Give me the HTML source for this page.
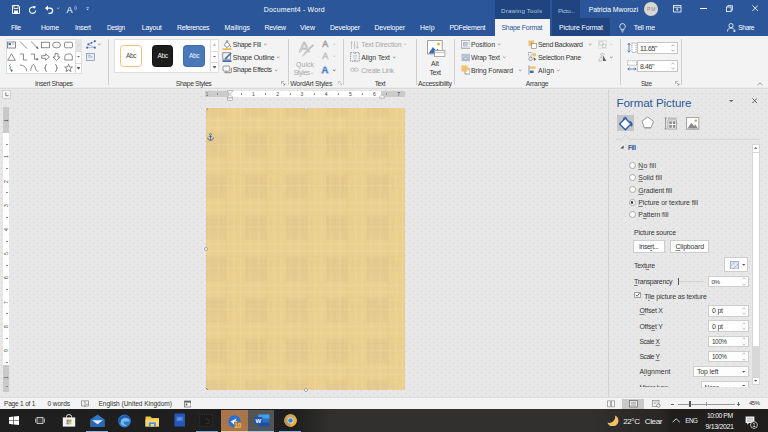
<!DOCTYPE html>
<html><head><meta charset="utf-8"><title>Document4 - Word</title>
<style>

html,body{margin:0;padding:0;}
body{width:768px;height:432px;overflow:hidden;background:#e5e5e5;font-family:"Liberation Sans",sans-serif;}
#root{position:relative;width:768px;height:432px;overflow:hidden;}
.b{position:absolute;display:block;}
.t{position:absolute;white-space:nowrap;display:block;}
u{text-decoration:underline;text-decoration-thickness:0.5px;text-underline-offset:0.6px;text-decoration-color:rgba(60,60,60,0.6);}

</style></head><body>
<div id="root">
<div class="b" style="left:0px;top:0px;width:768px;height:35.5px;background:#2b579a;"></div><div class="b" style="left:494.5px;top:0px;width:55.5px;height:18.8px;background:#1f447f;"></div><div class="b" style="left:552px;top:0px;width:28px;height:18px;background:#1f447f;"></div><div class="b" style="left:552px;top:18px;width:58px;height:17.5px;background:#1f447f;"></div><div class="b" style="left:494.5px;top:18.8px;width:55.5px;height:17.2px;background:#f3f3f3;"></div><svg class="b" style="left:12px;top:5px;" width="8" height="9" viewBox="0 0 8 9"><path d="M0.5 0.5 H6.5 L7.5 1.5 V8.5 H0.5Z" fill="none" stroke="#fff" stroke-width="1"/><rect x="2" y="0.5" width="4" height="3" fill="none" stroke="#fff" stroke-width="0.8"/><rect x="2" y="5.5" width="4" height="3" fill="#fff"/></svg><svg class="b" style="left:29px;top:5.5px;" width="8" height="9" viewBox="0 0 8 9"><path d="M5.2 1.4 A3.2 3.2 0 1 0 6.8 4.5" fill="none" stroke="#fff" stroke-width="1.1"/><path d="M4 0 L7.2 0.6 L5 3Z" fill="#fff"/></svg><svg class="b" style="left:45px;top:5px;" width="9" height="9" viewBox="0 0 9 9"><path d="M1 3.2 H5 A2.6 2.6 0 0 1 5 8.4 H3.5" fill="none" stroke="#fff" stroke-width="1.2"/><path d="M0 3.2 L3 0.6 V5.8Z" fill="#fff"/></svg><svg class="b" style="left:55.8px;top:5.8px;" width="4.4" height="4.4" viewBox="0 0 4.4 4.4"><path d="M1 1.6 L2.2 2.8 L3.4 1.6" fill="none" stroke="#c8d4e8" stroke-width="0.7"/></svg><span class="t" style="font-size:9.2px;color:#fff;line-height:13px;top:4.4px;letter-spacing:0.359px;left:66.5px;">A</span><svg class="b" style="left:73.6px;top:5px;" width="3.5" height="6" viewBox="0 0 3.5 6"><path d="M0.4 1.6 Q1.5 3 0.4 4.4" fill="none" stroke="#d5deee" stroke-width="0.6"/><path d="M1.6 0.5 Q3.6 3 1.6 5.5" fill="none" stroke="#c3cfe6" stroke-width="0.6"/></svg><svg class="b" style="left:85.7px;top:7.3px;" width="3.2" height="4" viewBox="0 0 3.2 4"><path d="M0.3 0.5 H2.9" stroke="#d4dded" stroke-width="0.6"/><path d="M0.3 1.7 L1.6 3.2 L2.9 1.7Z" fill="#d4dded"/></svg><span class="t" style="font-size:6.93px;color:#fff;line-height:10px;top:5px;letter-spacing:0.190px;left:263.8px;">Document4  -  Word</span><span class="t" style="font-size:6.16px;color:#b9c6dd;line-height:9px;top:5.5px;letter-spacing:0.203px;left:501px;">Drawing Tools</span><span class="t" style="font-size:6.16px;color:#b9c6dd;line-height:9px;top:5.5px;letter-spacing:-0.261px;left:558px;">Pictu...</span><span class="t" style="font-size:6.93px;color:#fff;line-height:10px;top:5px;letter-spacing:-0.105px;left:588.8px;">Patricia Mworozi</span><div class="b" style="left:644px;top:1.5px;width:14px;height:14px;background:#d9d6d4;border-radius:7px;"></div><span class="t" style="font-size:5px;color:#8a8a8a;line-height:7px;top:5.7px;letter-spacing:1.000px;left:647px;">PM</span><svg class="b" style="left:673px;top:5px;" width="9" height="8" viewBox="0 0 9 8"><rect x="0.5" y="0.5" width="7.5" height="6.5" fill="none" stroke="#fff" stroke-width="0.8"/><path d="M0.5 2.3 H8" stroke="#fff" stroke-width="0.7"/><path d="M4.2 3.6 V6 M3 4.6 L4.2 3.5 L5.4 4.6" stroke="#fff" stroke-width="0.7" fill="none"/></svg><div class="b" style="left:700px;top:8px;width:6.5px;height:0.8px;background:#fff;"></div><svg class="b" style="left:726px;top:5px;" width="7" height="8" viewBox="0 0 7 8"><rect x="0.5" y="2" width="4.6" height="4.6" fill="none" stroke="#fff" stroke-width="0.8"/><path d="M1.8 2 V0.6 H6.4 V5.2 H5.1" fill="none" stroke="#fff" stroke-width="0.8"/></svg><svg class="b" style="left:752px;top:5.2px;" width="6.4" height="6.4" viewBox="0 0 6.4 6.4"><path d="M0.4 0.4 L6 6 M6 0.4 L0.4 6" stroke="#fff" stroke-width="0.9"/></svg><span class="t" style="font-size:6.93px;color:#fff;line-height:10px;top:22.8px;letter-spacing:-0.385px;left:11px;">File</span><span class="t" style="font-size:6.93px;color:#fff;line-height:10px;top:22.8px;letter-spacing:-0.156px;left:41px;">Home</span><span class="t" style="font-size:6.93px;color:#fff;line-height:10px;top:22.8px;letter-spacing:-0.263px;left:75px;">Insert</span><span class="t" style="font-size:6.46px;color:#fff;line-height:10px;top:22.8px;letter-spacing:-0.420px;left:107px;">Design</span><span class="t" style="font-size:6.93px;color:#fff;line-height:10px;top:22.8px;letter-spacing:-0.159px;left:141.8px;">Layout</span><span class="t" style="font-size:6.93px;color:#fff;line-height:10px;top:22.8px;letter-spacing:-0.323px;left:177px;">References</span><span class="t" style="font-size:6.93px;color:#fff;line-height:10px;top:22.8px;letter-spacing:0.016px;left:224.5px;">Mailings</span><span class="t" style="font-size:6.93px;color:#fff;line-height:10px;top:22.8px;letter-spacing:-0.241px;left:264.5px;">Review</span><span class="t" style="font-size:6.93px;color:#fff;line-height:10px;top:22.8px;letter-spacing:0.036px;left:300px;">View</span><span class="t" style="font-size:6.93px;color:#fff;line-height:10px;top:22.8px;letter-spacing:-0.195px;left:330px;">Developer</span><span class="t" style="font-size:6.93px;color:#fff;line-height:10px;top:22.8px;letter-spacing:-0.133px;left:374.5px;">Developer</span><span class="t" style="font-size:6.93px;color:#fff;line-height:10px;top:22.8px;letter-spacing:0.083px;left:420px;">Help</span><span class="t" style="font-size:6.93px;color:#fff;line-height:10px;top:22.8px;letter-spacing:-0.276px;left:449.5px;">PDFelement</span><span class="t" style="font-size:6.93px;color:#2b579a;line-height:10px;top:22.8px;letter-spacing:-0.261px;left:501.5px;">Shape Format</span><span class="t" style="font-size:6.93px;color:#fff;line-height:10px;top:22.8px;letter-spacing:-0.107px;left:559px;">Picture Format</span><svg class="b" style="left:618.5px;top:22.5px;" width="7" height="10" viewBox="0 0 7 10"><path d="M3.5 0.6 A2.7 2.7 0 0 1 5 5.6 V6.8 H2 V5.6 A2.7 2.7 0 0 1 3.5 0.6Z" fill="none" stroke="#fff" stroke-width="0.8"/><path d="M2.3 8 H4.7 M2.8 9.1 H4.2" stroke="#fff" stroke-width="0.6"/></svg><span class="t" style="font-size:6.93px;color:#fff;line-height:10px;top:22.8px;letter-spacing:-0.123px;left:633.8px;">Tell me</span><svg class="b" style="left:726.5px;top:23px;" width="9" height="9" viewBox="0 0 9 9"><circle cx="4" cy="2.6" r="2.1" fill="none" stroke="#fff" stroke-width="0.8"/><path d="M0.5 8.5 C0.5 5.8 2 5 4 5 C5.5 5 6.6 5.6 7 6.5" fill="none" stroke="#fff" stroke-width="0.8"/><path d="M6 8 H8.8 M7.4 6.6 V9.4" stroke="#fff" stroke-width="0.7"/></svg><span class="t" style="font-size:6.7px;color:#fff;line-height:10px;top:22.8px;letter-spacing:-0.420px;left:738.3px;">Share</span><div class="b" style="left:0px;top:35.5px;width:768px;height:51.5px;background:#f3f3f3;"></div><div class="b" style="left:0px;top:87px;width:768px;height:2.5px;background:#ebebeb;"></div><div class="b" style="left:0px;top:88px;width:768px;height:0.6px;background:#d9d9d9;"></div><div class="b" style="left:108.45px;top:39px;width:0.5px;height:46px;background:#cfcfcf;"></div><div class="b" style="left:287.55px;top:39px;width:0.5px;height:46px;background:#cfcfcf;"></div><div class="b" style="left:343.45px;top:39px;width:0.5px;height:46px;background:#cfcfcf;"></div><div class="b" style="left:415.55px;top:39px;width:0.5px;height:46px;background:#cfcfcf;"></div><div class="b" style="left:453.75px;top:39px;width:0.5px;height:46px;background:#cfcfcf;"></div><div class="b" style="left:620.25px;top:39px;width:0.5px;height:46px;background:#cfcfcf;"></div><div class="b" style="left:681.45px;top:39px;width:0.5px;height:46px;background:#cfcfcf;"></div><div class="b" style="left:5.5px;top:39.4px;width:76.8px;height:34.8px;background:#fff;border:1px solid #dedede;box-sizing:border-box;"></div><div class="b" style="left:74.8px;top:39.4px;width:7.5px;height:34.8px;background:#fdfdfd;border:1px solid #dedede;box-sizing:border-box;"></div><div class="b" style="left:74.8px;top:39.4px;width:7.5px;height:11.9px;background:#e4e4e4;"></div><div class="b" style="left:75px;top:51px;width:7px;height:0.6px;background:#dcdcdc;"></div><div class="b" style="left:75px;top:62.5px;width:7px;height:0.6px;background:#dcdcdc;"></div><svg class="b" style="left:77px;top:44.55px;" width="3" height="1.5" viewBox="0 0 3 1.5"><path d="M0 1.5 L1.5 0 L3 1.5Z" fill="#c4c4c4"/></svg><svg class="b" style="left:77px;top:56.25px;" width="3" height="1.5" viewBox="0 0 3 1.5"><path d="M0 0 L3 0 L1.5 1.5Z" fill="#666"/></svg><div class="b" style="left:77px;top:66.6px;width:3px;height:0.6px;background:#666;"></div><svg class="b" style="left:77px;top:68.25px;" width="3" height="1.5" viewBox="0 0 3 1.5"><path d="M0 0 L3 0 L1.5 1.5Z" fill="#666"/></svg><svg class="b" style="left:6.8px;top:41.3px;" width="9" height="8" viewBox="0 0 9 8"><rect x="0.5" y="1" width="8" height="6" fill="none" stroke="#5a5a5a" stroke-width="0.7"/><rect x="1.5" y="2" width="2.5" height="2.2" fill="#4472c4"/><path d="M4.8 3 H7.4" stroke="#5a5a5a" stroke-width="0.5"/></svg><svg class="b" style="left:18.8px;top:41.3px;" width="9" height="8" viewBox="0 0 9 8"><path d="M1 0.5 L8 7.5" fill="none" stroke="#5a5a5a" stroke-width="0.7"/></svg><svg class="b" style="left:29.7px;top:41.3px;" width="9" height="8" viewBox="0 0 9 8"><path d="M1 0.5 L8 7.5" fill="none" stroke="#5a5a5a" stroke-width="0.7"/><path d="M8.4 7.9 L5.8 7 L7.5 5.3Z" fill="#5a5a5a"/></svg><svg class="b" style="left:40.8px;top:41.3px;" width="9" height="8" viewBox="0 0 9 8"><rect x="0.5" y="1.2" width="8" height="5.6" fill="none" stroke="#5a5a5a" stroke-width="0.7"/></svg><svg class="b" style="left:52.2px;top:41.3px;" width="9" height="8" viewBox="0 0 9 8"><ellipse cx="4.5" cy="4" rx="4" ry="2.9" fill="none" stroke="#5a5a5a" stroke-width="0.7"/></svg><svg class="b" style="left:63.5px;top:41.3px;" width="9" height="8" viewBox="0 0 9 8"><rect x="0.5" y="1.2" width="8" height="5.6" rx="1.3" fill="none" stroke="#5a5a5a" stroke-width="0.7"/></svg><svg class="b" style="left:6.8px;top:52.7px;" width="9" height="8" viewBox="0 0 9 8"><path d="M4.5 0.8 L8.3 7.3 H0.7Z" fill="none" stroke="#5a5a5a" stroke-width="0.7"/></svg><svg class="b" style="left:18.8px;top:52.7px;" width="9" height="8" viewBox="0 0 9 8"><path d="M0.8 1 H4.5 V7 H8.2" fill="none" stroke="#5a5a5a" stroke-width="0.7"/></svg><svg class="b" style="left:29.7px;top:52.7px;" width="9" height="8" viewBox="0 0 9 8"><path d="M0.8 1 H4.5 V6.2 H7.5" fill="none" stroke="#5a5a5a" stroke-width="0.7"/><path d="M8.8 6.2 L6.6 4.9 V7.5Z" fill="#5a5a5a"/></svg><svg class="b" style="left:40.8px;top:52.7px;" width="9" height="8" viewBox="0 0 9 8"><path d="M0.7 2.7 H4.6 V0.8 L8.4 4 L4.6 7.2 V5.3 H0.7Z" fill="none" stroke="#5a5a5a" stroke-width="0.7"/></svg><svg class="b" style="left:52.2px;top:52.7px;" width="9" height="8" viewBox="0 0 9 8"><path d="M3 0.6 H6 V4 H8 L4.5 7.5 L1 4 H3Z" fill="none" stroke="#5a5a5a" stroke-width="0.7"/></svg><svg class="b" style="left:63.5px;top:52.7px;" width="9" height="8" viewBox="0 0 9 8"><path d="M0.8 7 V3.4 Q1.2 1 3.4 1 H6.8 L8.3 3 V7Z" fill="none" stroke="#5a5a5a" stroke-width="0.7"/></svg><svg class="b" style="left:6.8px;top:64px;" width="9" height="8" viewBox="0 0 9 8"><path d="M3.5 0.5 C1 2 4.5 2.5 3 4.2 C1.8 5.5 5.5 5 4.5 7.6" fill="none" stroke="#55708f" stroke-width="0.9"/><circle cx="4.6" cy="6.6" r="1" fill="#55708f"/></svg><svg class="b" style="left:18.8px;top:64px;" width="9" height="8" viewBox="0 0 9 8"><path d="M0.8 1 Q7 1 7.8 7.4" fill="none" stroke="#5a5a5a" stroke-width="0.7"/></svg><svg class="b" style="left:29.7px;top:64px;" width="9" height="8" viewBox="0 0 9 8"><path d="M0.6 7 C2 -1 4 -1 5.4 4 C6 6.5 7 7.4 8.4 7.2" fill="none" stroke="#5a5a5a" stroke-width="0.7"/></svg><svg class="b" style="left:40.8px;top:64px;" width="9" height="8" viewBox="0 0 9 8"><path d="M6 0.5 Q4.5 0.5 4.5 2 V3 Q4.5 4 3.3 4 Q4.5 4 4.5 5 V6 Q4.5 7.5 6 7.5" fill="none" stroke="#5a5a5a" stroke-width="0.7"/></svg><svg class="b" style="left:52.2px;top:64px;" width="9" height="8" viewBox="0 0 9 8"><path d="M3 0.5 Q4.5 0.5 4.5 2 V3 Q4.5 4 5.7 4 Q4.5 4 4.5 5 V6 Q4.5 7.5 3 7.5" fill="none" stroke="#5a5a5a" stroke-width="0.7"/></svg><svg class="b" style="left:63.5px;top:64px;" width="9" height="8" viewBox="0 0 9 8"><path d="M4.5 0.4 L5.6 3 L8.4 3.1 L6.2 4.9 L7 7.6 L4.5 6 L2 7.6 L2.8 4.9 L0.6 3.1 L3.4 3Z" fill="none" stroke="#5a5a5a" stroke-width="0.7"/></svg><svg class="b" style="left:85.5px;top:39.5px;" width="10" height="9" viewBox="0 0 10 9"><path d="M8.8 1.2 L2.4 4.4 L8.8 7.6 H1.2" fill="none" stroke="#7d9acb" stroke-width="0.6"/><g fill="#2f5fa8"><rect x="7.9" y="0.3" width="1.8" height="1.8"/><rect x="1.5" y="3.5" width="1.8" height="1.8"/><rect x="4.6" y="2" width="1.6" height="1.6"/><rect x="7.9" y="6.7" width="1.8" height="1.8"/><rect x="0.3" y="6.7" width="1.8" height="1.8"/></g></svg><svg class="b" style="left:97.2px;top:41.7px;" width="4.6" height="4.6" viewBox="0 0 4.6 4.6"><path d="M1 1.65 L2.3 2.95 L3.6 1.65" fill="none" stroke="#777" stroke-width="0.7"/></svg><svg class="b" style="left:86px;top:52.5px;" width="9" height="8" viewBox="0 0 9 8"><rect x="0.5" y="0.5" width="8" height="7" fill="#e9eef7" stroke="#7b8fb0" stroke-width="0.7"/><path d="M1.8 2.3 H5 M1.8 4 H7" stroke="#7b8fb0" stroke-width="0.6"/></svg><span class="t" style="font-size:6.82px;color:#383838;line-height:10px;top:78.9px;letter-spacing:-0.337px;left:35px;">Insert Shapes</span><div class="b" style="left:114.3px;top:39.4px;width:104.4px;height:33.3px;background:#fff;border:1px solid #dedede;box-sizing:border-box;"></div><div class="b" style="left:210.3px;top:39.4px;width:8.4px;height:33.3px;background:#fdfdfd;border:1px solid #dedede;box-sizing:border-box;"></div><div class="b" style="left:210.8px;top:50.5px;width:7.9px;height:0.6px;background:#dcdcdc;"></div><div class="b" style="left:210.8px;top:61.5px;width:7.9px;height:0.6px;background:#dcdcdc;"></div><svg class="b" style="left:213.2px;top:44.25px;" width="3" height="1.5" viewBox="0 0 3 1.5"><path d="M0 1.5 L1.5 0 L3 1.5Z" fill="#888"/></svg><svg class="b" style="left:213.2px;top:55.75px;" width="3" height="1.5" viewBox="0 0 3 1.5"><path d="M0 0 L3 0 L1.5 1.5Z" fill="#666"/></svg><div class="b" style="left:213.2px;top:65.6px;width:3px;height:0.6px;background:#666;"></div><svg class="b" style="left:213.2px;top:67.25px;" width="3" height="1.5" viewBox="0 0 3 1.5"><path d="M0 0 L3 0 L1.5 1.5Z" fill="#666"/></svg><div class="b" style="left:120px;top:45.3px;width:21.7px;height:21.3px;background:#fff;border:1px solid #efc27e;box-sizing:border-box;border-radius:3.5px;"></div><div class="b" style="left:151.7px;top:45.3px;width:21.7px;height:21.3px;background:#1d1d1d;border:1px solid #111;box-sizing:border-box;border-radius:3.5px;"></div><div class="b" style="left:183px;top:45.3px;width:22px;height:21.3px;background:#4a78b8;border:1px solid #3f68a6;box-sizing:border-box;border-radius:3.5px;"></div><span class="t" style="font-size:6.58px;color:#4a4a4a;line-height:9px;top:50.6px;letter-spacing:-0.420px;left:126px;">Abc</span><span class="t" style="font-size:6.58px;color:#f0f0f0;line-height:9px;top:50.6px;letter-spacing:-0.420px;left:157.5px;">Abc</span><span class="t" style="font-size:6.58px;color:#f0f4fa;line-height:9px;top:50.6px;letter-spacing:-0.420px;left:189px;">Abc</span><span class="t" style="font-size:6.82px;color:#383838;line-height:10px;top:78.9px;letter-spacing:-0.387px;left:175.8px;">Shape Styles</span><svg class="b" style="left:281px;top:81.3px;" width="4.5" height="4.5" viewBox="0 0 4.5 4.5"><path d="M0.3 3.2 V0.3 H3.2" fill="none" stroke="#777" stroke-width="0.6"/><path d="M1.6 1.6 L4 4 M4 2.4 V4 H2.4" fill="none" stroke="#777" stroke-width="0.6"/></svg><svg class="b" style="left:221.5px;top:39.5px;" width="10" height="10" viewBox="0 0 10 10"><path d="M2 4.8 L5 1.8 L8 4.8 L5 7.6Z" fill="#f7f7f7" stroke="#666" stroke-width="0.7"/><path d="M4.2 2.4 V0.8 Q5 0 5.8 0.8 V2.6" fill="none" stroke="#666" stroke-width="0.6"/><path d="M8.6 5.6 Q9.6 7 8.6 7.6 Q7.8 7 8.6 5.6Z" fill="#666"/><rect x="0.5" y="8.3" width="9" height="1.6" fill="#f1b434"/></svg><span class="t" style="font-size:6.93px;color:#383838;line-height:10px;top:39.8px;letter-spacing:-0.287px;left:232.8px;">Shape Fill</span><svg class="b" style="left:262.7px;top:42px;" width="4.6" height="4.6" viewBox="0 0 4.6 4.6"><path d="M1 1.65 L2.3 2.95 L3.6 1.65" fill="none" stroke="#777" stroke-width="0.7"/></svg><svg class="b" style="left:221.5px;top:52px;" width="10" height="10" viewBox="0 0 10 10"><rect x="0.8" y="0.8" width="7.6" height="6.4" fill="none" stroke="#666" stroke-width="0.7"/><path d="M3.2 5.8 L8.6 0.6 L9.6 1.6 L4.3 6.9 L2.8 7.3Z" fill="#3b6cb5"/><rect x="0.5" y="8.3" width="9" height="1.6" fill="#2f5fa8"/></svg><span class="t" style="font-size:6.93px;color:#383838;line-height:10px;top:52.5px;letter-spacing:-0.181px;left:232.8px;">Shape Outline</span><svg class="b" style="left:276px;top:54.7px;" width="4.6" height="4.6" viewBox="0 0 4.6 4.6"><path d="M1 1.65 L2.3 2.95 L3.6 1.65" fill="none" stroke="#777" stroke-width="0.7"/></svg><svg class="b" style="left:221.5px;top:65px;" width="10" height="9" viewBox="0 0 10 9"><rect x="1" y="1" width="6.8" height="5.2" rx="1.4" fill="#fafafa" stroke="#666" stroke-width="0.7"/><path d="M2.4 7.6 H8.2 Q9.4 7.6 9.4 6.4 V3" fill="none" stroke="#999" stroke-width="1.1"/></svg><span class="t" style="font-size:6.93px;color:#383838;line-height:10px;top:65.3px;letter-spacing:-0.315px;left:232.8px;">Shape Effects</span><svg class="b" style="left:273.7px;top:67.5px;" width="4.6" height="4.6" viewBox="0 0 4.6 4.6"><path d="M1 1.65 L2.3 2.95 L3.6 1.65" fill="none" stroke="#777" stroke-width="0.7"/></svg><svg class="b" style="left:297px;top:38.5px;" width="18" height="20" viewBox="0 0 18 20"><text x="2" y="13.4" font-family="Liberation Sans, sans-serif" font-size="15.5" fill="#f6f6f6" stroke="#b4b4b4" stroke-width="0.7">A</text><path d="M16.6 5.6 L8 14.4" stroke="#c2c2c2" stroke-width="1.7" fill="none"/><path d="M7.6 13 L9.4 14.8 L4.4 18.2Z" fill="#c8c8c8"/></svg><span class="t" style="font-size:6.93px;color:#a6a6a6;line-height:10px;top:59.5px;letter-spacing:0.074px;left:296px;">Quick</span><span class="t" style="font-size:6.83px;color:#a6a6a6;line-height:10px;top:68px;letter-spacing:-0.420px;left:293.7px;">Styles</span><svg class="b" style="left:309.8px;top:70.5px;" width="4.4" height="4.4" viewBox="0 0 4.4 4.4"><path d="M1 1.6 L2.2 2.8 L3.4 1.6" fill="none" stroke="#b5b5b5" stroke-width="0.7"/></svg><svg class="b" style="left:320.5px;top:38.5px;" width="9" height="9" viewBox="0 0 9 9"><text x="1.2" y="7.6" font-family="Liberation Sans, sans-serif" font-size="9" fill="#f3f3f3" stroke="#9f9f9f" stroke-width="0.6">A</text></svg><svg class="b" style="left:332.2px;top:41.5px;" width="4.6" height="4.6" viewBox="0 0 4.6 4.6"><path d="M1 1.65 L2.3 2.95 L3.6 1.65" fill="none" stroke="#c0c0c0" stroke-width="0.7"/></svg><svg class="b" style="left:320.5px;top:50.8px;" width="9" height="9" viewBox="0 0 9 9"><text x="1.2" y="7.6" font-family="Liberation Sans, sans-serif" font-size="9" fill="#f3f3f3" stroke="#c0c0c0" stroke-width="0.6">A</text></svg><svg class="b" style="left:332.2px;top:54.3px;" width="4.6" height="4.6" viewBox="0 0 4.6 4.6"><path d="M1 1.65 L2.3 2.95 L3.6 1.65" fill="none" stroke="#c0c0c0" stroke-width="0.7"/></svg><svg class="b" style="left:319.5px;top:63.5px;" width="11" height="11" viewBox="0 0 11 11"><text x="1.6" y="9" font-family="Liberation Sans, sans-serif" font-size="9.4" font-weight="700" fill="#4f7fc4" stroke="#b4c8e8" stroke-width="1.4" paint-order="stroke">A</text></svg><svg class="b" style="left:331.7px;top:67.5px;" width="4.6" height="4.6" viewBox="0 0 4.6 4.6"><path d="M1 1.65 L2.3 2.95 L3.6 1.65" fill="none" stroke="#555" stroke-width="0.8"/></svg><span class="t" style="font-size:6.82px;color:#383838;line-height:10px;top:78.9px;letter-spacing:-0.255px;left:290.3px;">WordArt Styles</span><svg class="b" style="left:337.5px;top:81.3px;" width="4.5" height="4.5" viewBox="0 0 4.5 4.5"><path d="M0.3 3.2 V0.3 H3.2" fill="none" stroke="#aaa" stroke-width="0.6"/><path d="M1.6 1.6 L4 4 M4 2.4 V4 H2.4" fill="none" stroke="#aaa" stroke-width="0.6"/></svg><svg class="b" style="left:350px;top:39.5px;" width="9" height="10" viewBox="0 0 9 10"><path d="M1.5 1 V9 M4.5 1 V9" stroke="#b5b5b5" stroke-width="0.7"/><path d="M7.4 1.5 V8 M6.2 6.6 L7.4 8.4 L8.6 6.6" fill="none" stroke="#b5b5b5" stroke-width="0.7"/><path d="M0.4 3 H2.6 M3.4 5 H5.6" stroke="#b5b5b5" stroke-width="0.6"/></svg><span class="t" style="font-size:6.93px;color:#a6a6a6;line-height:10px;top:39.8px;letter-spacing:-0.118px;left:361.3px;">Text Direction</span><svg class="b" style="left:403px;top:42px;" width="4.6" height="4.6" viewBox="0 0 4.6 4.6"><path d="M1 1.65 L2.3 2.95 L3.6 1.65" fill="none" stroke="#c0c0c0" stroke-width="0.7"/></svg><svg class="b" style="left:350px;top:52px;" width="10" height="10" viewBox="0 0 10 10"><rect x="0.6" y="0.6" width="8.6" height="8.6" fill="none" stroke="#666" stroke-width="0.7" stroke-dasharray="1.4 0.9"/><path d="M3 3.6 H7 M3 4.9 H7 M3 6.2 H7" stroke="#b9c2d0" stroke-width="0.6"/><path d="M5 0.8 V2.2 M5 9 V7.6" stroke="#3b6cb5" stroke-width="0.7"/></svg><span class="t" style="font-size:6.93px;color:#383838;line-height:10px;top:52.5px;letter-spacing:-0.132px;left:361.3px;">Align Text</span><svg class="b" style="left:392px;top:54.7px;" width="4.6" height="4.6" viewBox="0 0 4.6 4.6"><path d="M1 1.65 L2.3 2.95 L3.6 1.65" fill="none" stroke="#666" stroke-width="0.7"/></svg><svg class="b" style="left:350px;top:67px;" width="9" height="6" viewBox="0 0 9 6"><rect x="0.5" y="1.2" width="4.4" height="3" rx="1.5" fill="none" stroke="#b5b5b5" stroke-width="0.8"/><rect x="4" y="1.2" width="4.4" height="3" rx="1.5" fill="none" stroke="#b5b5b5" stroke-width="0.8"/></svg><span class="t" style="font-size:6.93px;color:#a6a6a6;line-height:10px;top:65.5px;letter-spacing:-0.271px;left:361.3px;">Create Link</span><span class="t" style="font-size:6.58px;color:#383838;line-height:10px;top:78.9px;letter-spacing:-0.420px;left:374.7px;">Text</span><svg class="b" style="left:427px;top:40px;" width="18.5" height="17" viewBox="0 0 18.5 17"><rect x="0.6" y="0.6" width="14.6" height="13.4" fill="#fff" stroke="#8a8a8a" stroke-width="0.8"/><circle cx="11.5" cy="4" r="1.5" fill="#f1b434"/><path d="M1.5 13.5 L6 7 L9 10.5 L10.7 8.7 L14.5 13.5Z" fill="#3b6cb5"/><rect x="7.5" y="10.5" width="10.4" height="6" fill="#fff" stroke="#9a9a9a" stroke-width="0.8"/><path d="M7.5 12.5 H17.9" stroke="#9a9a9a" stroke-width="0.6"/></svg><span class="t" style="font-size:6.93px;color:#383838;line-height:10px;top:59.2px;letter-spacing:-0.039px;left:431px;">Alt</span><span class="t" style="font-size:6.93px;color:#383838;line-height:10px;top:68px;letter-spacing:-0.401px;left:429.5px;">Text</span><span class="t" style="font-size:6.82px;color:#383838;line-height:10px;top:78.9px;letter-spacing:-0.259px;left:418px;">Accessibility</span><svg class="b" style="left:460.5px;top:39.8px;" width="9.5" height="9" viewBox="0 0 9.5 9"><rect x="0.5" y="0.5" width="8.5" height="8" fill="#fff" stroke="#9a9a9a" stroke-width="0.7"/><rect x="2.2" y="2.2" width="4.2" height="3.2" fill="#b9cbe6" stroke="#6a8fc8" stroke-width="0.4"/><path d="M1.5 6.6 H7.8 M1.5 7.7 H7.8 M7 2.5 H7.8 M7 3.8 H7.8" stroke="#999" stroke-width="0.4"/></svg><span class="t" style="font-size:6.93px;color:#383838;line-height:10px;top:39.8px;letter-spacing:-0.092px;left:471px;">Position</span><svg class="b" style="left:496.7px;top:42px;" width="4.6" height="4.6" viewBox="0 0 4.6 4.6"><path d="M1 1.65 L2.3 2.95 L3.6 1.65" fill="none" stroke="#777" stroke-width="0.7"/></svg><svg class="b" style="left:460.5px;top:52.5px;" width="9.5" height="9" viewBox="0 0 9.5 9"><rect x="0.5" y="0.8" width="8.5" height="7.4" fill="#a9b7cc"/><path d="M0.5 2 H9 M0.5 3.6 H9 M0.5 5.2 H9 M0.5 6.8 H9" stroke="#dfe6f1" stroke-width="0.5"/><path d="M2.4 6.4 Q4.8 1.6 7.2 6.4Z" fill="#f3f3f3" stroke="#5d7fb3" stroke-width="0.5"/></svg><span class="t" style="font-size:6.93px;color:#383838;line-height:10px;top:52.5px;letter-spacing:-0.238px;left:471px;">Wrap Text</span><svg class="b" style="left:502.2px;top:54.7px;" width="4.6" height="4.6" viewBox="0 0 4.6 4.6"><path d="M1 1.65 L2.3 2.95 L3.6 1.65" fill="none" stroke="#777" stroke-width="0.7"/></svg><svg class="b" style="left:460.5px;top:65px;" width="9.5" height="9.5" viewBox="0 0 9.5 9.5"><rect x="4" y="4" width="5" height="5" fill="#fff" stroke="#777" stroke-width="0.7"/><rect x="0.5" y="0.5" width="6" height="6" fill="#f3c267"/></svg><span class="t" style="font-size:6.93px;color:#383838;line-height:10px;top:65.5px;letter-spacing:-0.122px;left:471px;">Bring Forward</span><svg class="b" style="left:518.2px;top:67.7px;" width="4.6" height="4.6" viewBox="0 0 4.6 4.6"><path d="M1 1.65 L2.3 2.95 L3.6 1.65" fill="none" stroke="#777" stroke-width="0.7"/></svg><svg class="b" style="left:527.5px;top:39.8px;" width="9.5" height="9.5" viewBox="0 0 9.5 9.5"><rect x="0.5" y="0.5" width="5.5" height="5.5" fill="#f3c267"/><rect x="3.6" y="3.6" width="5" height="5" fill="#fff" stroke="#7a7a7a" stroke-width="0.6"/></svg><span class="t" style="font-size:6.93px;color:#383838;line-height:10px;top:39.8px;letter-spacing:-0.307px;left:538px;">Send Backward</span><svg class="b" style="left:588.2px;top:42px;" width="4.6" height="4.6" viewBox="0 0 4.6 4.6"><path d="M1 1.65 L2.3 2.95 L3.6 1.65" fill="none" stroke="#777" stroke-width="0.7"/></svg><svg class="b" style="left:527.5px;top:52.3px;" width="9.5" height="9.5" viewBox="0 0 9.5 9.5"><rect x="0.5" y="0.5" width="3.6" height="3.6" fill="none" stroke="#666" stroke-width="0.6" stroke-dasharray="1 0.7"/><rect x="5" y="1.2" width="3" height="3" fill="#f3c267"/><circle cx="2.6" cy="7" r="1.7" fill="none" stroke="#666" stroke-width="0.6"/><path d="M5.4 5.2 L8.6 7.6 L7 7.8 L6.2 9.2Z" fill="#555"/></svg><span class="t" style="font-size:6.93px;color:#383838;line-height:10px;top:52.5px;letter-spacing:-0.275px;left:538px;">Selection Pane</span><svg class="b" style="left:528px;top:65px;" width="9" height="10" viewBox="0 0 9 10"><path d="M1 0.5 V9.5" stroke="#666" stroke-width="0.7"/><rect x="2" y="1.4" width="5.6" height="2.4" fill="#f3c267"/><rect x="2" y="5.6" width="3.6" height="2.4" fill="#3b6cb5"/></svg><span class="t" style="font-size:6.93px;color:#383838;line-height:10px;top:65.5px;letter-spacing:0.148px;left:538px;">Align</span><svg class="b" style="left:555.5px;top:67.7px;" width="4.6" height="4.6" viewBox="0 0 4.6 4.6"><path d="M1 1.65 L2.3 2.95 L3.6 1.65" fill="none" stroke="#777" stroke-width="0.7"/></svg><svg class="b" style="left:597.5px;top:39.8px;" width="9.5" height="9.5" viewBox="0 0 9.5 9.5"><rect x="0.6" y="0.6" width="8.2" height="8.2" fill="none" stroke="#bdbdbd" stroke-width="0.6" stroke-dasharray="1.2 0.8"/><rect x="1.8" y="1.8" width="3.4" height="3.4" fill="none" stroke="#bdbdbd" stroke-width="0.6"/><rect x="4.2" y="4.2" width="3.4" height="3.4" fill="none" stroke="#bdbdbd" stroke-width="0.6"/></svg><svg class="b" style="left:608.7px;top:42px;" width="4.6" height="4.6" viewBox="0 0 4.6 4.6"><path d="M1 1.65 L2.3 2.95 L3.6 1.65" fill="none" stroke="#c4c4c4" stroke-width="0.7"/></svg><svg class="b" style="left:598px;top:52.5px;" width="9" height="9" viewBox="0 0 9 9"><path d="M0.5 8 L4 2 V8Z" fill="none" stroke="#aaa" stroke-width="0.6"/><path d="M5 8 V2.4 L8.4 8Z" fill="#666"/><path d="M2 1.4 Q4.5 -0.4 7 1.4" fill="none" stroke="#888" stroke-width="0.5"/></svg><svg class="b" style="left:608.7px;top:54.7px;" width="4.6" height="4.6" viewBox="0 0 4.6 4.6"><path d="M1 1.65 L2.3 2.95 L3.6 1.65" fill="none" stroke="#666" stroke-width="0.7"/></svg><span class="t" style="font-size:6.82px;color:#383838;line-height:10px;top:78.9px;letter-spacing:-0.258px;left:525.8px;">Arrange</span><svg class="b" style="left:626.5px;top:42px;" width="10" height="11.5" viewBox="0 0 10 11.5"><path d="M2 1.5 V10 M0.7 3 L2 1.2 L3.3 3 M0.7 8.5 L2 10.3 L3.3 8.5" fill="none" stroke="#3b6cb5" stroke-width="0.8"/><rect x="5" y="1" width="4" height="9.5" fill="#fff" stroke="#777" stroke-width="0.6" stroke-dasharray="1.2 0.8"/></svg><div class="b" style="left:637px;top:42px;width:40.5px;height:12.4px;background:#fff;border:1px solid #c4c4c4;box-sizing:border-box;"></div><span class="t" style="font-size:6.93px;color:#383838;line-height:10px;top:44px;letter-spacing:-0.353px;left:640px;">11.65"</span><svg class="b" style="left:626.5px;top:60px;" width="10" height="11.5" viewBox="0 0 10 11.5"><rect x="0.6" y="0.8" width="8.8" height="4.4" fill="#fff" stroke="#777" stroke-width="0.6" stroke-dasharray="1.2 0.8"/><path d="M1 9 H9 M2.4 7.7 L0.8 9 L2.4 10.3 M7.6 7.7 L9.2 9 L7.6 10.3" fill="none" stroke="#3b6cb5" stroke-width="0.8"/></svg><div class="b" style="left:637px;top:59.5px;width:40.5px;height:12.8px;background:#fff;border:1px solid #c4c4c4;box-sizing:border-box;"></div><span class="t" style="font-size:6.93px;color:#383838;line-height:10px;top:61.5px;letter-spacing:-0.359px;left:640px;">8.46"</span><svg class="b" style="left:670.5px;top:44px;" width="4" height="3" viewBox="0 0 4 3"><path d="M0.4 2.4 L2 0.7 L3.6 2.4" fill="none" stroke="#888" stroke-width="0.6"/></svg><svg class="b" style="left:670.5px;top:49.4px;" width="4" height="3" viewBox="0 0 4 3"><path d="M0.4 0.6 L2 2.3 L3.6 0.6" fill="none" stroke="#888" stroke-width="0.6"/></svg><svg class="b" style="left:670.5px;top:61.7px;" width="4" height="3" viewBox="0 0 4 3"><path d="M0.4 2.4 L2 0.7 L3.6 2.4" fill="none" stroke="#888" stroke-width="0.6"/></svg><svg class="b" style="left:670.5px;top:67.1px;" width="4" height="3" viewBox="0 0 4 3"><path d="M0.4 0.6 L2 2.3 L3.6 0.6" fill="none" stroke="#888" stroke-width="0.6"/></svg><span class="t" style="font-size:6.3px;color:#383838;line-height:10px;top:78.9px;letter-spacing:-0.420px;left:641px;">Size</span><svg class="b" style="left:675px;top:81.3px;" width="4.5" height="4.5" viewBox="0 0 4.5 4.5"><path d="M0.3 3.2 V0.3 H3.2" fill="none" stroke="#777" stroke-width="0.6"/><path d="M1.6 1.6 L4 4 M4 2.4 V4 H2.4" fill="none" stroke="#777" stroke-width="0.6"/></svg><svg class="b" style="left:757.3px;top:82px;" width="6" height="4" viewBox="0 0 6 4"><path d="M0.5 3.2 L3 0.8 L5.5 3.2" fill="none" stroke="#666" stroke-width="0.7"/></svg><div class="b" style="left:0px;top:89.5px;width:768px;height:308.5px;background:#e7e7e7;"></div><svg class="b" style="left:0px;top:90px;" width="768" height="308" viewBox="0 0 768 308"><defs><pattern id="dots" width="8" height="6" patternUnits="userSpaceOnUse"><rect x="1" y="0" width="1" height="1" fill="#d0d3db"/><rect x="5" y="3" width="1" height="1" fill="#d0d3db"/></pattern></defs><rect width="768" height="309" fill="url(#dots)"/></svg><div class="b" style="left:2px;top:90px;width:8.5px;height:8.5px;background:#f6f6f6;border:0.5px solid #d0d0d0;box-sizing:border-box;"></div><svg class="b" style="left:4.5px;top:92px;" width="4" height="4.5" viewBox="0 0 4 4.5"><path d="M0.8 0.5 V3.7 H3.5" fill="none" stroke="#666" stroke-width="0.8"/></svg><div class="b" style="left:205px;top:91px;width:199.5px;height:6.2px;background:#fff;"></div><div class="b" style="left:205px;top:91px;width:24px;height:6.2px;background:#cbcbcb;"></div><div class="b" style="left:380.5px;top:91px;width:24px;height:6.2px;background:#cbcbcb;"></div><span class="t" style="font-size:5px;color:#3a3f4a;line-height:7px;top:91.1px;left:252.109px;">1</span><span class="t" style="font-size:5px;color:#3a3f4a;line-height:7px;top:91.1px;left:276.309px;">2</span><span class="t" style="font-size:5px;color:#3a3f4a;line-height:7px;top:91.1px;left:300.509px;">3</span><span class="t" style="font-size:5px;color:#3a3f4a;line-height:7px;top:91.1px;left:324.709px;">4</span><span class="t" style="font-size:5px;color:#3a3f4a;line-height:7px;top:91.1px;left:348.909px;">5</span><span class="t" style="font-size:5px;color:#3a3f4a;line-height:7px;top:91.1px;left:373.109px;">6</span><span class="t" style="font-size:5px;color:#3a3f4a;line-height:7px;top:91.1px;left:397.309px;">7</span><div class="b" style="left:216.9px;top:93.2px;width:0.6px;height:2.2px;background:#8e8e8e;"></div><div class="b" style="left:241.1px;top:93.2px;width:0.6px;height:2.2px;background:#8e8e8e;"></div><div class="b" style="left:265.3px;top:93.2px;width:0.6px;height:2.2px;background:#8e8e8e;"></div><div class="b" style="left:289.5px;top:93.2px;width:0.6px;height:2.2px;background:#8e8e8e;"></div><div class="b" style="left:313.7px;top:93.2px;width:0.6px;height:2.2px;background:#8e8e8e;"></div><div class="b" style="left:337.9px;top:93.2px;width:0.6px;height:2.2px;background:#8e8e8e;"></div><div class="b" style="left:362.1px;top:93.2px;width:0.6px;height:2.2px;background:#8e8e8e;"></div><div class="b" style="left:386.3px;top:93.2px;width:0.6px;height:2.2px;background:#8e8e8e;"></div><span class="t" style="font-size:4.6px;color:#666;line-height:6px;top:92.1px;left:205.719px;">1</span><svg class="b" style="left:226.5px;top:89.5px;" width="6" height="12" viewBox="0 0 6 12"><path d="M0.6 0.5 H5.4 V2 L3 4.2 L0.6 2Z" fill="#f4f4f4" stroke="#8a8a8a" stroke-width="0.5"/><path d="M0.6 8 V6.6 L3 4.6 L5.4 6.6 V8Z" fill="#f4f4f4" stroke="#8a8a8a" stroke-width="0.5"/><rect x="0.6" y="8" width="4.8" height="2.6" fill="#f4f4f4" stroke="#8a8a8a" stroke-width="0.5"/></svg><svg class="b" style="left:379px;top:93.5px;" width="6" height="5" viewBox="0 0 6 5"><path d="M0.6 4.2 V2.6 L3 0.6 L5.4 2.6 V4.2Z" fill="#f4f4f4" stroke="#8a8a8a" stroke-width="0.5"/></svg><div class="b" style="left:2.6px;top:107px;width:6.3px;height:285px;background:#fff;"></div><div class="b" style="left:2.6px;top:107px;width:6.3px;height:25.5px;background:#c9c9c9;"></div><div class="b" style="left:2.6px;top:365px;width:6.3px;height:27px;background:#c9c9c9;"></div><span class="t" style="font-size:5px;color:#3a3f4a;line-height:7px;top:153.4px;left:5.20937px;transform:rotate(-90deg);">1</span><span class="t" style="font-size:5px;color:#3a3f4a;line-height:7px;top:177.6px;left:5.20937px;transform:rotate(-90deg);">2</span><span class="t" style="font-size:5px;color:#3a3f4a;line-height:7px;top:201.8px;left:5.20937px;transform:rotate(-90deg);">3</span><span class="t" style="font-size:5px;color:#3a3f4a;line-height:7px;top:226px;left:5.20937px;transform:rotate(-90deg);">4</span><span class="t" style="font-size:5px;color:#3a3f4a;line-height:7px;top:250.2px;left:5.20937px;transform:rotate(-90deg);">5</span><span class="t" style="font-size:5px;color:#3a3f4a;line-height:7px;top:274.4px;left:5.20937px;transform:rotate(-90deg);">6</span><span class="t" style="font-size:5px;color:#3a3f4a;line-height:7px;top:298.6px;left:5.20937px;transform:rotate(-90deg);">7</span><span class="t" style="font-size:5px;color:#3a3f4a;line-height:7px;top:322.8px;left:5.20937px;transform:rotate(-90deg);">8</span><span class="t" style="font-size:5px;color:#3a3f4a;line-height:7px;top:347px;left:5.20937px;transform:rotate(-90deg);">9</span><div class="b" style="left:5.8px;top:119.8px;width:2.6px;height:0.6px;background:#8a8a8a;"></div><div class="b" style="left:5.8px;top:144px;width:2.6px;height:0.6px;background:#8a8a8a;"></div><div class="b" style="left:5.8px;top:168.2px;width:2.6px;height:0.6px;background:#8a8a8a;"></div><div class="b" style="left:5.8px;top:192.4px;width:2.6px;height:0.6px;background:#8a8a8a;"></div><div class="b" style="left:5.8px;top:216.6px;width:2.6px;height:0.6px;background:#8a8a8a;"></div><div class="b" style="left:5.8px;top:240.8px;width:2.6px;height:0.6px;background:#8a8a8a;"></div><div class="b" style="left:5.8px;top:265px;width:2.6px;height:0.6px;background:#8a8a8a;"></div><div class="b" style="left:5.8px;top:289.2px;width:2.6px;height:0.6px;background:#8a8a8a;"></div><div class="b" style="left:5.8px;top:313.4px;width:2.6px;height:0.6px;background:#8a8a8a;"></div><div class="b" style="left:5.8px;top:337.6px;width:2.6px;height:0.6px;background:#8a8a8a;"></div><div class="b" style="left:5.8px;top:361.8px;width:2.6px;height:0.6px;background:#8a8a8a;"></div><div class="b" style="left:5.8px;top:386px;width:2.6px;height:0.6px;background:#8a8a8a;"></div><span class="t" style="font-size:5px;color:#555;line-height:7px;top:117px;left:5.20937px;transform:rotate(-90deg);">1</span><span class="t" style="font-size:5px;color:#555;line-height:7px;top:374px;left:5.20937px;transform:rotate(-90deg);">1</span><svg class="b" style="left:206px;top:107.8px;" width="199" height="281.9" viewBox="0 0 199 281.9"><defs>
<filter id="pb" x="-10%" y="-10%" width="120%" height="120%"><feGaussianBlur stdDeviation="0.7"/></filter>
<pattern id="pap" x="-1.5" y="3.5" width="40.5" height="41.2" patternUnits="userSpaceOnUse">
<rect width="40.5" height="41.2" fill="#ebcf91"/>
<rect x="0" y="22" width="22" height="19.200000000000003" fill="#dfc48b" opacity="0.42" filter="url(#pb)"/>
<rect x="0" y="0" width="22" height="5" fill="#dfc48b" opacity="0.4" filter="url(#pb)"/>
<rect x="24" y="24" width="14" height="12" fill="#e2c78d" opacity="0.22" filter="url(#pb)"/>
<g stroke="#f2dea8" stroke-width="1" opacity="0.36"><path d="M5 0 V41.2 M13.5 0 V41.2 M30 0 V41.2 M36 0 V41.2"/><path d="M0 9 H40.5 M0 16 H40.5 M0 33 H40.5"/></g>
<g stroke="#d6b97f" stroke-width="0.6" opacity="0.38"><path d="M2 22 V41.2 M5.5 25 V38 M9 22 V41.2 M12.5 26 V40 M17 22 V41.2 M21.5 0 V41.2 M26 25 V36 M31 25 V36"/><path d="M0 26 H22 M0 30.5 H22 M0 35 H22 M0 21.5 H40.5"/></g>
</pattern></defs>
<rect width="199" height="281.9" fill="url(#pap)"/></svg><div class="b" style="left:303.5px;top:387.5px;width:4px;height:4px;background:#fff;border:0.6px solid #a4a4a4;box-sizing:border-box;border-radius:2px;"></div><div class="b" style="left:204px;top:246.5px;width:4px;height:4px;background:#fff;border:0.6px solid #a4a4a4;box-sizing:border-box;border-radius:2px;"></div><svg class="b" style="left:303.5px;top:108px;" width="4" height="2.2" viewBox="0 0 4 2.2"><path d="M0.2 0 A1.8 1.8 0 0 0 3.8 0Z" fill="#fff" stroke="#8e8e8e" stroke-width="0.4"/></svg><svg class="b" style="left:205.5px;top:107.5px;" width="2.5" height="2.5" viewBox="0 0 2.5 2.5"><path d="M0 2.4 L2.4 0" stroke="#6f7f98" stroke-width="0.9"/></svg><svg class="b" style="left:205.5px;top:387.5px;" width="2.5" height="2.5" viewBox="0 0 2.5 2.5"><path d="M0 0 L2.4 2.4" stroke="#6f7f98" stroke-width="0.9"/></svg><svg class="b" style="left:206.5px;top:132.5px;" width="7" height="8" viewBox="0 0 7 8"><circle cx="3.5" cy="1.4" r="1" fill="none" stroke="#3565ad" stroke-width="0.7"/><path d="M3.5 2.4 V7.2 M1.8 3.6 H5.2" stroke="#3565ad" stroke-width="0.8"/><path d="M0.6 4.8 Q0.8 7.3 3.5 7.4 Q6.2 7.3 6.4 4.8" fill="none" stroke="#3565ad" stroke-width="0.9"/></svg><div class="b" style="left:608.6px;top:88.8px;width:159.4px;height:309.2px;background:none;"></div><div class="b" style="left:607.5px;top:89.5px;width:0.8px;height:308.5px;background:#d2d2d2;"></div><span class="t" style="font-size:11.6px;color:#2b579a;line-height:16px;top:95px;letter-spacing:-0.079px;left:616.5px;">Format Picture</span><svg class="b" style="left:729.1px;top:99.8px;" width="4.4" height="2.2" viewBox="0 0 4.4 2.2"><path d="M0 0 L4.4 0 L2.2 2.2Z" fill="#666"/></svg><svg class="b" style="left:751.8px;top:98.3px;" width="5.4" height="5.4" viewBox="0 0 5.4 5.4"><path d="M0.4 0.4 L5 5 M5 0.4 L0.4 5" stroke="#5a5a5a" stroke-width="0.9"/></svg><div class="b" style="left:617px;top:114.7px;width:17px;height:16px;background:#c6c6c6;"></div><svg class="b" style="left:618px;top:116px;" width="16" height="15" viewBox="0 0 16 15"><path d="M1.6 8 L7.3 2.3 L13 8 L7.3 13.7Z" fill="#fff" stroke="#2f5fa8" stroke-width="1.4" stroke-linejoin="round"/><path d="M5.6 4 Q5 1.2 7 1 Q8.6 1 9 3.6" fill="none" stroke="#2f5fa8" stroke-width="0.9"/><path d="M11.2 4.4 Q14.6 5.6 14.6 8.6 Q14.6 10.6 13.4 10.6 Q12.2 10.6 12.4 8.6 Q12.6 6.4 11.2 4.4Z" fill="#2f5fa8"/></svg><svg class="b" style="left:641px;top:115.8px;" width="13.5" height="13.5" viewBox="0 0 13.5 13.5"><path d="M6.7 1 L12.4 5.2 L10.2 11.6 H3.2 L1 5.2Z" fill="#fff" stroke="#8f8f8f" stroke-width="0.9"/><path d="M3.4 12.6 H10" stroke="#b5b5b5" stroke-width="0.9"/></svg><svg class="b" style="left:663.5px;top:116.5px;" width="13" height="13" viewBox="0 0 13 13"><path d="M1.6 1 V12 M0.4 1 H2.8 M0.4 12 H2.8" stroke="#777" stroke-width="0.7" fill="none"/><path d="M3.5 1.2 H12.6" stroke="#888" stroke-width="0.7"/><rect x="4" y="3" width="8.4" height="9" fill="#fff" stroke="#8a8a8a" stroke-width="0.7"/><rect x="5.2" y="4.2" width="2.6" height="2.8" fill="#8a8a8a"/><rect x="8.8" y="4.2" width="2.6" height="2.8" fill="#8a8a8a"/><rect x="5.2" y="8" width="2.6" height="2.8" fill="#8a8a8a"/><rect x="8.8" y="8" width="2.6" height="2.8" fill="#8a8a8a"/></svg><svg class="b" style="left:686px;top:116.5px;" width="13.5" height="13" viewBox="0 0 13.5 13"><rect x="0.6" y="0.6" width="12.2" height="11.6" fill="#fff" stroke="#9a9a9a" stroke-width="0.9"/><circle cx="9.8" cy="3.6" r="1.2" fill="#d39a4a"/><path d="M1.4 11.4 L5.4 5.8 L8 9 L9.4 7.6 L12 11.4Z" fill="#8a8a8a"/></svg><svg class="b" style="left:616px;top:133px;" width="144" height="8" viewBox="0 0 144 8"><path d="M0 6.4 H5.6 L9.6 1.8 L13.6 6.4 H144" fill="none" stroke="#cfcfcf" stroke-width="0.8"/></svg><svg class="b" style="left:619.5px;top:145.3px;" width="4" height="4" viewBox="0 0 4 4"><path d="M3.6 0.4 V3.6 H0.4Z" fill="#444"/></svg><span class="t" style="font-size:6.42px;color:#2b579a;font-weight:700;line-height:10px;top:143.1px;letter-spacing:-0.420px;left:628px;">Fill</span><div class="b" style="left:628.6px;top:161.5px;width:7px;height:7px;background:#fff;border:0.8px solid #a8a8a8;box-sizing:border-box;border-radius:3.5px;"></div><span class="t" style="font-size:6.93px;color:#383838;line-height:10px;top:160.7px;letter-spacing:0.065px;left:638.3px;"><u>N</u>o fill</span><div class="b" style="left:628.6px;top:174px;width:7px;height:7px;background:#fff;border:0.8px solid #a8a8a8;box-sizing:border-box;border-radius:3.5px;"></div><span class="t" style="font-size:6.93px;color:#383838;line-height:10px;top:173.2px;letter-spacing:-0.019px;left:638.3px;"><u>S</u>olid fill</span><div class="b" style="left:628.6px;top:186.4px;width:7px;height:7px;background:#fff;border:0.8px solid #a8a8a8;box-sizing:border-box;border-radius:3.5px;"></div><span class="t" style="font-size:6.93px;color:#383838;line-height:10px;top:185.6px;letter-spacing:-0.110px;left:638.3px;"><u>G</u>radient fill</span><div class="b" style="left:628.6px;top:198.7px;width:7px;height:7px;background:#fff;border:0.8px solid #a8a8a8;box-sizing:border-box;border-radius:3.5px;"></div><div class="b" style="left:630.7px;top:200.8px;width:2.8px;height:2.8px;background:#333;border-radius:1.5px;"></div><span class="t" style="font-size:6.93px;color:#383838;line-height:10px;top:197.9px;letter-spacing:-0.068px;left:638.3px;"><u>P</u>icture or texture fill</span><div class="b" style="left:628.6px;top:211.1px;width:7px;height:7px;background:#fff;border:0.8px solid #a8a8a8;box-sizing:border-box;border-radius:3.5px;"></div><span class="t" style="font-size:6.93px;color:#383838;line-height:10px;top:210.3px;letter-spacing:-0.054px;left:638.3px;">P<u>a</u>ttern fill</span><span class="t" style="font-size:6.93px;color:#383838;line-height:10px;top:228px;letter-spacing:-0.173px;left:634px;">Picture source</span><div class="b" style="left:633.4px;top:239.6px;width:31.8px;height:13.9px;background:#fdfdfd;border:1px solid #cdcdcd;box-sizing:border-box;"></div><span class="t" style="font-size:6.86px;color:#383838;line-height:10px;top:242.2px;letter-spacing:-0.420px;left:639px;">Inse<u>r</u>t...</span><div class="b" style="left:670.3px;top:239.6px;width:39.1px;height:13.9px;background:#fdfdfd;border:1px solid #cdcdcd;box-sizing:border-box;"></div><span class="t" style="font-size:6.93px;color:#383838;line-height:10px;top:242.2px;letter-spacing:-0.143px;left:675.5px;"><u>C</u>lipboard</span><span class="t" style="font-size:6.93px;color:#383838;line-height:10px;top:260.8px;letter-spacing:-0.286px;left:634px;">Text<u>u</u>re</span><div class="b" style="left:724.4px;top:257.3px;width:23.8px;height:15px;background:#fdfdfd;border:1px solid #cdcdcd;box-sizing:border-box;"></div><svg class="b" style="left:729.5px;top:260.8px;" width="9" height="8.5" viewBox="0 0 9 8.5"><rect x="0.5" y="0.5" width="8" height="7.5" fill="#dfe6f1" stroke="#8a9bb8" stroke-width="0.7"/><path d="M0.5 5 L5 0.5 M3 8 L8.5 2.5" stroke="#8a9bb8" stroke-width="0.6"/></svg><svg class="b" style="left:741.9px;top:264.45px;" width="3.4" height="1.7" viewBox="0 0 3.4 1.7"><path d="M0 0 L3.4 0 L1.7 1.7Z" fill="#555"/></svg><span class="t" style="font-size:6.93px;color:#383838;line-height:10px;top:277.2px;letter-spacing:-0.325px;left:634px;"><u>T</u>ransparency</span><div class="b" style="left:678px;top:278px;width:0.8px;height:6.5px;background:#555;"></div><div class="b" style="left:679px;top:281.2px;width:25px;height:0.5px;background:#d2d2d2;"></div><div class="b" style="left:707.9px;top:275.7px;width:40.7px;height:11.3px;background:#fdfdfd;border:1px solid #cdcdcd;box-sizing:border-box;"></div><span class="t" style="font-size:6.17px;color:#383838;line-height:10px;top:277px;letter-spacing:-0.420px;left:711.5px;">0%</span><svg class="b" style="left:742px;top:277.1px;" width="4" height="3" viewBox="0 0 4 3"><path d="M0.4 2.4 L2 0.7 L3.6 2.4" fill="none" stroke="#999" stroke-width="0.6"/></svg><svg class="b" style="left:742px;top:282.5px;" width="4" height="3" viewBox="0 0 4 3"><path d="M0.4 0.6 L2 2.3 L3.6 0.6" fill="none" stroke="#999" stroke-width="0.6"/></svg><div class="b" style="left:633.8px;top:291.6px;width:7px;height:6.8px;background:#fff;border:0.8px solid #a0a0a0;box-sizing:border-box;"></div><svg class="b" style="left:634.7px;top:292.4px;" width="5.4" height="5.4" viewBox="0 0 5.4 5.4"><path d="M0.7 2.8 L2.1 4.3 L4.7 0.9" fill="none" stroke="#444" stroke-width="0.8"/></svg><span class="t" style="font-size:6.93px;color:#383838;line-height:10px;top:291.5px;letter-spacing:-0.152px;left:644.2px;">T<u>i</u>le picture as texture</span><span class="t" style="font-size:6.93px;color:#383838;line-height:10px;top:306.4px;letter-spacing:-0.184px;left:639.4px;"><u>O</u>ffset X</span><div class="b" style="left:707.7px;top:305.1px;width:41.1px;height:11.6px;background:#fdfdfd;border:1px solid #cdcdcd;box-sizing:border-box;"></div><span class="t" style="font-size:6.93px;color:#383838;line-height:10px;top:306.2px;letter-spacing:-0.182px;left:712px;">0 pt</span><svg class="b" style="left:742px;top:306.65px;" width="4" height="3" viewBox="0 0 4 3"><path d="M0.4 2.4 L2 0.7 L3.6 2.4" fill="none" stroke="#999" stroke-width="0.6"/></svg><svg class="b" style="left:742px;top:312.05px;" width="4" height="3" viewBox="0 0 4 3"><path d="M0.4 0.6 L2 2.3 L3.6 0.6" fill="none" stroke="#999" stroke-width="0.6"/></svg><span class="t" style="font-size:6.93px;color:#383838;line-height:10px;top:321.7px;letter-spacing:-0.169px;left:639.4px;">Offs<u>e</u>t Y</span><div class="b" style="left:707.7px;top:320.4px;width:41.1px;height:11.6px;background:#fdfdfd;border:1px solid #cdcdcd;box-sizing:border-box;"></div><span class="t" style="font-size:6.93px;color:#383838;line-height:10px;top:321.5px;letter-spacing:-0.182px;left:712px;">0 pt</span><svg class="b" style="left:742px;top:321.95px;" width="4" height="3" viewBox="0 0 4 3"><path d="M0.4 2.4 L2 0.7 L3.6 2.4" fill="none" stroke="#999" stroke-width="0.6"/></svg><svg class="b" style="left:742px;top:327.35px;" width="4" height="3" viewBox="0 0 4 3"><path d="M0.4 0.6 L2 2.3 L3.6 0.6" fill="none" stroke="#999" stroke-width="0.6"/></svg><span class="t" style="font-size:6.71px;color:#383838;line-height:10px;top:337.1px;letter-spacing:-0.420px;left:639.4px;">Scale <u>X</u></span><div class="b" style="left:707.7px;top:335.8px;width:41.1px;height:11.6px;background:#fdfdfd;border:1px solid #cdcdcd;box-sizing:border-box;"></div><span class="t" style="font-size:6.36px;color:#383838;line-height:10px;top:336.9px;letter-spacing:-0.420px;left:712px;">100%</span><svg class="b" style="left:742px;top:337.35px;" width="4" height="3" viewBox="0 0 4 3"><path d="M0.4 2.4 L2 0.7 L3.6 2.4" fill="none" stroke="#999" stroke-width="0.6"/></svg><svg class="b" style="left:742px;top:342.75px;" width="4" height="3" viewBox="0 0 4 3"><path d="M0.4 0.6 L2 2.3 L3.6 0.6" fill="none" stroke="#999" stroke-width="0.6"/></svg><span class="t" style="font-size:6.75px;color:#383838;line-height:10px;top:352.2px;letter-spacing:-0.420px;left:639.4px;">Scale <u>Y</u></span><div class="b" style="left:707.7px;top:350.9px;width:41.1px;height:11.6px;background:#fdfdfd;border:1px solid #cdcdcd;box-sizing:border-box;"></div><span class="t" style="font-size:6.36px;color:#383838;line-height:10px;top:352px;letter-spacing:-0.420px;left:712px;">100%</span><svg class="b" style="left:742px;top:352.45px;" width="4" height="3" viewBox="0 0 4 3"><path d="M0.4 2.4 L2 0.7 L3.6 2.4" fill="none" stroke="#999" stroke-width="0.6"/></svg><svg class="b" style="left:742px;top:357.85px;" width="4" height="3" viewBox="0 0 4 3"><path d="M0.4 0.6 L2 2.3 L3.6 0.6" fill="none" stroke="#999" stroke-width="0.6"/></svg><span class="t" style="font-size:6.93px;color:#383838;line-height:10px;top:367.3px;letter-spacing:0.036px;left:639.4px;">A<u>l</u>ignment</span><div class="b" style="left:693.3px;top:365.6px;width:55.5px;height:11.9px;background:#fdfdfd;border:1px solid #cdcdcd;box-sizing:border-box;"></div><span class="t" style="font-size:6.93px;color:#383838;line-height:10px;top:367.1px;letter-spacing:-0.118px;left:697px;">Top left</span><svg class="b" style="left:741.9px;top:370.95px;" width="3.4" height="1.7" viewBox="0 0 3.4 1.7"><path d="M0 0 L3.4 0 L1.7 1.7Z" fill="#555"/></svg><div class="b" style="left:608.6px;top:379px;width:143px;height:8.4px;overflow:hidden;"><div class="b" style="left:92px;top:1.5px;width:48.2px;height:11px;background:#fdfdfd;border:1px solid #cdcdcd;box-sizing:border-box;"></div><span class="t" style="left:30.8px;top:3.9px;font-size:6.3px;line-height:9px;color:#444;letter-spacing:-0.12px;"><u>M</u>irror type</span><span class="t" style="left:96px;top:3.8px;font-size:6.3px;line-height:9px;color:#444;letter-spacing:-0.12px;">None</span></div><svg class="b" style="left:741.9px;top:384.75px;" width="3.4" height="1.7" viewBox="0 0 3.4 1.7"><path d="M0 0 L3.4 0 L1.7 1.7Z" fill="#555"/></svg><div class="b" style="left:751.5px;top:144px;width:8.1px;height:241px;background:#fff;border:0.5px solid #d6d6d6;box-sizing:border-box;"></div><div class="b" style="left:751.5px;top:345.5px;width:8.1px;height:32px;background:#d8d8d8;"></div><div class="b" style="left:751.5px;top:152px;width:8.1px;height:0.5px;background:#d6d6d6;"></div><div class="b" style="left:751.5px;top:377.3px;width:8.1px;height:0.5px;background:#d6d6d6;"></div><svg class="b" style="left:753.9px;top:147.15px;" width="3.4" height="1.7" viewBox="0 0 3.4 1.7"><path d="M0 1.7 L1.7 0 L3.4 1.7Z" fill="#555"/></svg><svg class="b" style="left:753.9px;top:380.45px;" width="3.4" height="1.7" viewBox="0 0 3.4 1.7"><path d="M0 0 L3.4 0 L1.7 1.7Z" fill="#555"/></svg><div class="b" style="left:0px;top:397.7px;width:768px;height:11.7px;background:#f3f3f3;"></div><div class="b" style="left:0px;top:396.8px;width:768px;height:0.9px;background:#dedede;"></div><span class="t" style="font-size:6.6px;color:#333;line-height:9px;top:399.1px;letter-spacing:-0.223px;left:4px;">Page 1 of 1</span><span class="t" style="font-size:6.6px;color:#333;line-height:9px;top:399.1px;letter-spacing:-0.099px;left:47.5px;">0 words</span><svg class="b" style="left:81px;top:400px;" width="8" height="7.5" viewBox="0 0 8 7.5"><path d="M0.5 0.8 H3.4 Q4 0.8 4 1.5 V6.6 Q4 6 3.4 6 H0.5Z M4 1.5 Q4 0.8 4.6 0.8 H7.5 V6 H4.6 Q4 6 4 6.6" fill="none" stroke="#666" stroke-width="0.6"/><path d="M5 4.2 L5.8 5 L7 3.4" fill="none" stroke="#666" stroke-width="0.5"/></svg><span class="t" style="font-size:6.6px;color:#333;line-height:9px;top:399.1px;letter-spacing:-0.056px;left:98.5px;">English (United Kingdom)</span><svg class="b" style="left:183.5px;top:400px;" width="7.5" height="7.5" viewBox="0 0 7.5 7.5"><rect x="0.5" y="1" width="6.5" height="6" fill="none" stroke="#666" stroke-width="0.7"/><rect x="0.5" y="1" width="6.5" height="1.6" fill="#666"/><circle cx="2.4" cy="4.6" r="1" fill="#666"/></svg><svg class="b" style="left:606.5px;top:400px;" width="8" height="7.5" viewBox="0 0 8 7.5"><path d="M0.5 0.8 H3.6 V6.8 H0.5Z M4.4 0.8 H7.5 V6.8 H4.4Z" fill="none" stroke="#777" stroke-width="0.6"/></svg><div class="b" style="left:622.3px;top:398.5px;width:22.2px;height:10.8px;background:#c9c9c9;"></div><svg class="b" style="left:629px;top:400px;" width="9" height="7.5" viewBox="0 0 9 7.5"><rect x="0.5" y="0.5" width="8" height="6.5" fill="#e8e8e8" stroke="#666" stroke-width="0.7"/><path d="M2 2.3 H7 M2 3.8 H7 M2 5.3 H7" stroke="#777" stroke-width="0.5"/></svg><svg class="b" style="left:651.5px;top:400px;" width="9" height="8" viewBox="0 0 9 8"><rect x="0.5" y="0.5" width="6.5" height="6" fill="none" stroke="#777" stroke-width="0.6"/><path d="M1.6 2 H6 M1.6 3.4 H4.4" stroke="#888" stroke-width="0.5"/><circle cx="6.4" cy="5.6" r="1.7" fill="#f3f3f3" stroke="#666" stroke-width="0.6"/></svg><div class="b" style="left:670.5px;top:403.6px;width:3.5px;height:0.6px;background:#666;"></div><div class="b" style="left:678px;top:403.7px;width:57px;height:0.5px;background:#999;"></div><div class="b" style="left:706.3px;top:402.3px;width:0.5px;height:3.3px;background:#999;"></div><div class="b" style="left:688.8px;top:400.8px;width:1.8px;height:6.2px;background:#555;"></div><div class="b" style="left:736.5px;top:403.6px;width:3.8px;height:0.6px;background:#666;"></div><div class="b" style="left:738.1px;top:402px;width:0.6px;height:3.8px;background:#666;"></div><span class="t" style="font-size:5.92px;color:#333;line-height:9px;top:399.1px;letter-spacing:-0.420px;left:749px;">45%</span><div class="b" style="left:0px;top:409.4px;width:768px;height:22.6px;background:linear-gradient(90deg,#1f1f1f 0,#1f1f1f 296px,#32302e 330px,#32302e 590px,#2b2928 640px,#2a2827 662px,#201f1e 672px,#201f1e 768px);"></div><svg class="b" style="left:8.5px;top:416px;" width="10" height="9" viewBox="0 0 10 9"><path d="M0 1.3 L4.4 0.6 V4.2 H0Z M5 0.5 L10 0 V4.2 H5Z M0 4.8 H4.4 V8.4 L0 7.8Z M5 4.8 H10 V9 L5 8.5Z" fill="#fff"/></svg><svg class="b" style="left:35px;top:416px;" width="10" height="9" viewBox="0 0 10 9"><rect x="2" y="1.5" width="6" height="6" fill="none" stroke="#e6e6e6" stroke-width="0.8"/><path d="M0.4 2.5 V6.5 M9.6 2.5 V6.5" stroke="#e6e6e6" stroke-width="0.8"/><path d="M2 3.2 H8 M2 5.8 H8" stroke="#bbb" stroke-width="0.5"/></svg><svg class="b" style="left:62px;top:414.2px;" width="14" height="13" viewBox="0 0 14 13"><path d="M4.5 3.6 V2.4 Q4.5 0.6 7 0.6 Q9.5 0.6 9.5 2.4 V3.6" fill="none" stroke="#f2f2f2" stroke-width="0.9"/><rect x="0.8" y="3.4" width="12.4" height="9.2" fill="#f4f4f4"/><rect x="4.6" y="5.6" width="2.2" height="2.2" fill="#e8512a"/><rect x="7.2" y="5.6" width="2.2" height="2.2" fill="#7db53a"/><rect x="4.6" y="8.2" width="2.2" height="2.2" fill="#2e9fe0"/><rect x="7.2" y="8.2" width="2.2" height="2.2" fill="#f5b722"/></svg><svg class="b" style="left:89.5px;top:413.5px;" width="15" height="14" viewBox="0 0 15 14"><path d="M0.5 5.5 L7.5 0.6 L14.5 5.5 V13 H0.5Z" fill="#2f78c9"/><path d="M2.2 6.2 H12.8 L7.5 10.4Z" fill="#dfeaf7"/><path d="M0.5 5.5 L7.5 10.6 L14.5 5.5 V13 H0.5Z" fill="#2a68b3"/></svg><div class="b" style="left:85.5px;top:430.5px;width:22.5px;height:1.5px;background:#88b4e4;"></div><svg class="b" style="left:116.5px;top:414px;" width="15" height="14" viewBox="0 0 15 14"><circle cx="7.5" cy="7" r="6.4" fill="#2c7ad0"/><path d="M3.4 9.6 Q3 4.4 8 4 Q12.4 4 12.6 7.4 H6.6 Q6.4 10.6 10.4 11.4 Q5 13 3.4 9.6Z" fill="#8fd0f0" opacity="0.75"/><path d="M1.4 8.2 Q2 2.4 7.6 1.2 Q12.6 1 13.6 6 Q11.6 3.4 8 3.6 Q3.4 4 3.2 9.8Z" fill="#1d59a8"/></svg><svg class="b" style="left:144.5px;top:415.5px;" width="14.5" height="11" viewBox="0 0 14.5 11"><path d="M0.5 0.6 H5.5 L6.8 2 H14 V10.4 H0.5Z" fill="#f0c24c"/><rect x="0.5" y="3.4" width="13.5" height="7" fill="#f7d774"/><rect x="3.8" y="6.4" width="7" height="4" fill="#4a90d9"/><rect x="5.6" y="8" width="3.4" height="2.4" fill="#f7d774"/></svg><svg class="b" style="left:173.5px;top:413.4px;" width="11.5" height="14" viewBox="0 0 11.5 14"><rect x="0.4" y="0.4" width="10.7" height="13.2" rx="1" fill="#2458b8"/><rect x="2.4" y="3.6" width="6.8" height="4.6" fill="#3f74d2"/><path d="M3.4 5.2 H8.2 M3.4 6.6 H7" stroke="#9cb8ea" stroke-width="0.6"/></svg><svg class="b" style="left:199.4px;top:414px;" width="14" height="13" viewBox="0 0 14 13"><rect x="0.6" y="0.6" width="12.6" height="11.8" fill="#1a1a1a" stroke="#484848" stroke-width="0.7" stroke-dasharray="1 1.2"/><path d="M6 5 H10 V9.5 H7.4" fill="none" stroke="#4d4d4d" stroke-width="0.8" stroke-dasharray="1 1"/></svg><div class="b" style="left:196px;top:430.5px;width:21.5px;height:1.5px;background:#7da7d6;"></div><div class="b" style="left:220.8px;top:409.8px;width:27.2px;height:22.2px;background:#a9754c;"></div><div class="b" style="left:220.8px;top:430.5px;width:27.2px;height:1.5px;background:#e9c9a0;"></div><svg class="b" style="left:228px;top:414.5px;" width="15" height="13.5" viewBox="0 0 15 13.5"><circle cx="6.4" cy="6.4" r="6.1" fill="#2b6fd0"/><path d="M2.6 6.6 L8.6 3.2 L7.4 6.4 L10 5.8 L6 9.4Z" fill="#e8f0fb"/><rect x="6" y="6.8" width="7.4" height="6.6" fill="#a9754c"/><text x="6.3" y="12.6" font-family="Liberation Sans, sans-serif" font-size="6.4" font-weight="700" fill="#f6c64a">10</text></svg><div class="b" style="left:248px;top:409.8px;width:25.6px;height:22.2px;background:#545452;"></div><div class="b" style="left:248px;top:430.5px;width:25.5px;height:1.5px;background:#9cc2ee;"></div><svg class="b" style="left:253.5px;top:414.2px;" width="16" height="13" viewBox="0 0 16 13"><rect x="4.4" y="0.5" width="11" height="12" rx="0.8" fill="#2b6cc4"/><rect x="4.4" y="0.5" width="11" height="4" fill="#41a0e8"/><rect x="4.4" y="8.5" width="11" height="4" fill="#1c4fa0"/><rect x="0.4" y="3" width="8" height="7.4" rx="0.6" fill="#1b55b0"/><text x="1.5" y="9" font-family="Liberation Sans, sans-serif" font-size="6" font-weight="700" fill="#fff">W</text></svg><svg class="b" style="left:283.5px;top:414.3px;" width="13" height="13" viewBox="0 0 13 13"><circle cx="6.5" cy="6.5" r="6.2" fill="#dca23a"/><path d="M6.5 6.5 L1.1 3.4 A6.2 6.2 0 0 1 11.9 3.4Z" fill="#c9a85a"/><path d="M6.5 6.5 L11.9 3.4 A6.2 6.2 0 0 1 6.5 12.7Z" fill="#e5b23c"/><path d="M6.5 6.5 L6.5 12.7 A6.2 6.2 0 0 1 1.1 3.4Z" fill="#b99a5a"/><circle cx="6.5" cy="6.5" r="3" fill="#f0e8d8"/><circle cx="6.5" cy="6.5" r="2.3" fill="#3d7be0"/></svg><div class="b" style="left:279px;top:430.5px;width:21.5px;height:1.5px;background:#88b4e4;"></div><svg class="b" style="left:607px;top:414.8px;" width="12" height="11.5" viewBox="0 0 12 11.5"><path d="M8 0.4 A5.7 5.7 0 1 1 0.4 7.6 A6 6 0 0 0 8 0.4Z" fill="#f3c063"/></svg><span class="t" style="font-size:8.09px;color:#f0f0f0;line-height:12px;top:415.7px;letter-spacing:-0.420px;left:623.2px;">22°C</span><span class="t" style="font-size:8.11px;color:#f0f0f0;line-height:12px;top:415.7px;letter-spacing:-0.420px;left:644.8px;">Clear</span><svg class="b" style="left:671.5px;top:417.5px;" width="8.5" height="5" viewBox="0 0 8.5 5"><path d="M0.6 4.2 L4.2 0.8 L7.8 4.2" fill="none" stroke="#eee" stroke-width="0.9"/></svg><span class="t" style="font-size:6.3px;color:#f0f0f0;line-height:10px;top:415.7px;letter-spacing:-0.420px;left:685.2px;">ENG</span><span class="t" style="font-size:6.77px;color:#f4f4f4;line-height:10px;top:411.1px;letter-spacing:-0.420px;left:707px;">10:00 PM</span><span class="t" style="font-size:7.04px;color:#f4f4f4;line-height:10px;top:421.5px;letter-spacing:-0.348px;left:705.5px;">9/13/2021</span><svg class="b" style="left:745px;top:415.5px;" width="13" height="13" viewBox="0 0 13 13"><path d="M0.6 0.6 H9.4 V7 H4 L2.2 8.8 V7 H0.6Z" fill="#f0f0f0"/><path d="M2 2.4 H8 M2 4 H8 M2 5.4 H6" stroke="#888" stroke-width="0.5"/><circle cx="9" cy="9" r="3.4" fill="#1e1e1e" stroke="#f0f0f0" stroke-width="0.7"/><text x="7.6" y="11" font-family="Liberation Sans, sans-serif" font-size="5.4" fill="#fff">1</text></svg>
</div>
</body></html>
